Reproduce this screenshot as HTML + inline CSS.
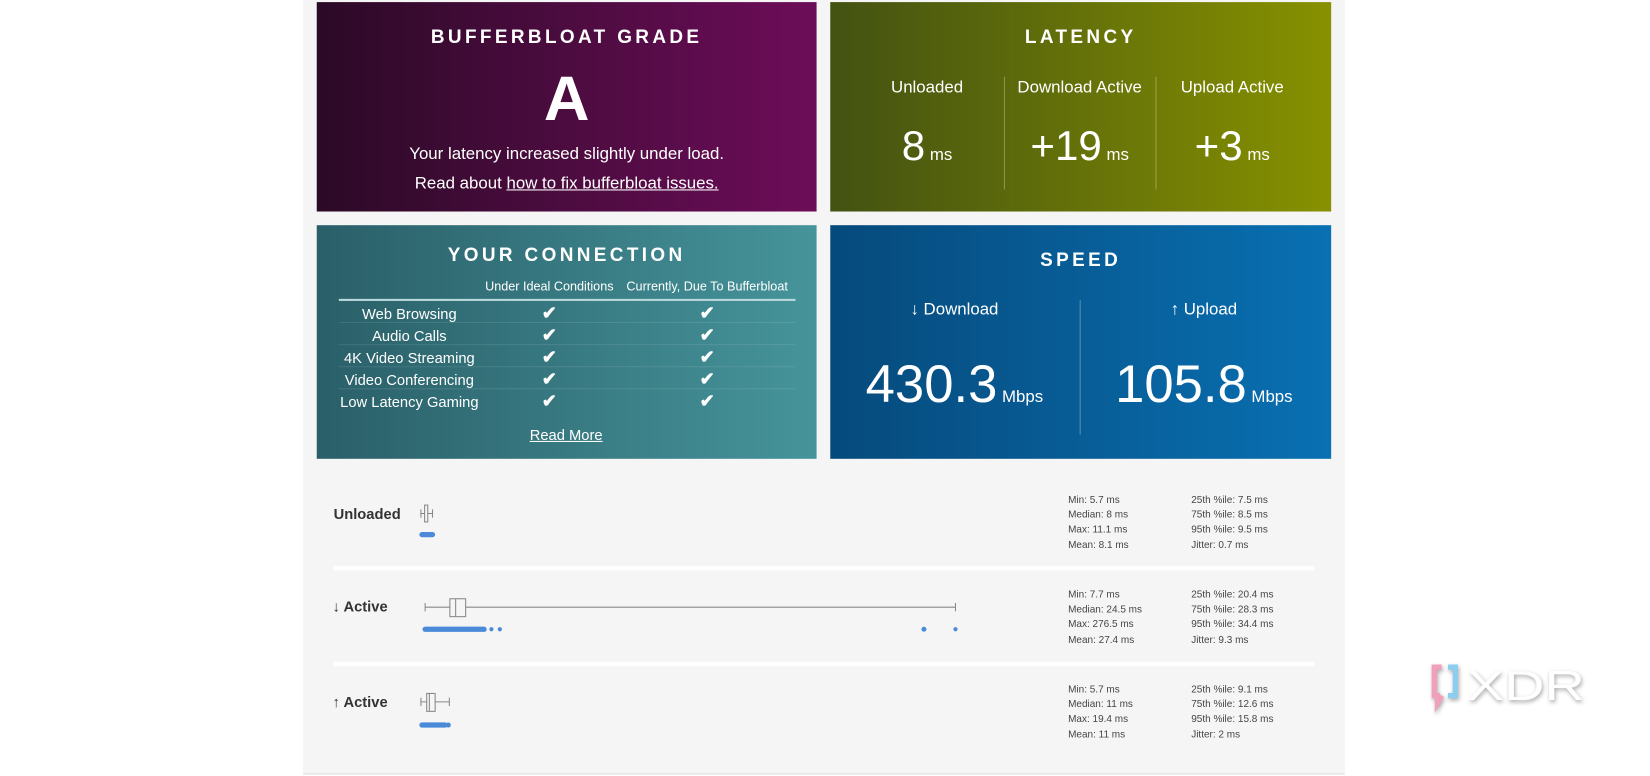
<!DOCTYPE html>
<html><head><meta charset="utf-8"><style>
*{margin:0;padding:0;box-sizing:border-box}
html,body{width:1650px;height:775px;overflow:hidden;background:#fff;font-family:"Liberation Sans",sans-serif}
#w{position:absolute;left:0;top:0;width:1568px;height:737px;transform:scale(1.0523);transform-origin:0 0}
.abs{position:absolute}
.gray{left:288px;top:0;width:990px;height:736px;background:#f5f5f5;border-bottom:1px solid #ddd}
.card{position:absolute;color:#fff;text-align:center}
.t{position:absolute;left:0;right:0;font-weight:bold;font-size:18px;letter-spacing:3.2px}
.c{position:absolute;transform:translateX(-50%);white-space:nowrap}
.vl{position:absolute;width:1px;background:rgba(255,255,255,.3)}
.st{position:absolute;font-size:9.5px;color:#444;line-height:14.2px}
.lbl{position:absolute;font-size:14px;font-weight:bold;color:#333}
.div{position:absolute;left:317px;width:932px;height:4px;background:#fff}
.ck{font-size:17px;font-weight:bold}
</style></head><body><div id="w">
<div class="abs gray"></div>

<div class="card" style="left:301px;top:2px;width:475px;height:199px;background:linear-gradient(90deg,#2b0a26,#6d0d59)">
 <div class="t" style="top:23px">BUFFERBLOAT GRADE</div>
 <div class="t" style="top:57px;font-size:60px;letter-spacing:0;line-height:70px">A</div>
 <div class="abs" style="left:0;right:0;top:136px;font-size:16px">Your latency increased slightly under load.</div>
 <div class="abs" style="left:0;right:0;top:164px;font-size:16px">Read about <u>how to fix bufferbloat issues.</u></div>
</div>

<div class="card" style="left:789px;top:2px;width:476px;height:199px;background:linear-gradient(90deg,#435212,#879100)">
 <div class="t" style="top:23px">LATENCY</div>
 <div class="c" style="left:92px;top:73px;font-size:16px">Unloaded</div>
 <div class="c" style="left:237px;top:73px;font-size:16px">Download Active</div>
 <div class="c" style="left:382px;top:73px;font-size:16px">Upload Active</div>
 <div class="vl" style="left:165px;top:71px;height:107px"></div>
 <div class="vl" style="left:309px;top:71px;height:107px"></div>
 <div class="c" style="left:92px;top:115px;font-size:40px">8<span style="font-size:16px"> ms</span></div>
 <div class="c" style="left:237px;top:115px;font-size:40px">+19<span style="font-size:16px"> ms</span></div>
 <div class="c" style="left:382px;top:115px;font-size:40px">+3<span style="font-size:16px"> ms</span></div>
</div>

<div class="card" style="left:301px;top:214px;width:475px;height:222px;background:linear-gradient(90deg,#2a5f68,#46949b)">
 <div class="t" style="top:18px">YOUR CONNECTION</div>
 <div class="c" style="left:221px;top:51px;font-size:12px">Under Ideal Conditions</div>
 <div class="c" style="left:371px;top:51px;font-size:12px">Currently, Due To Bufferbloat</div>
 <div class="abs" style="left:21px;top:70px;width:434px;height:2px;background:#b8d8dc"></div>
 <div class="abs" style="left:21px;top:72px;width:434px;font-size:14px">
  <div style="position:relative;height:21px;border-bottom:1px solid rgba(255,255,255,.1)"><span class="c" style="left:67px;top:4px">Web Browsing</span><span class="c ck" style="left:200px;top:2px">✔</span><span class="c ck" style="left:350px;top:2px">✔</span></div>
  <div style="position:relative;height:21px;border-bottom:1px solid rgba(255,255,255,.1)"><span class="c" style="left:67px;top:4px">Audio Calls</span><span class="c ck" style="left:200px;top:2px">✔</span><span class="c ck" style="left:350px;top:2px">✔</span></div>
  <div style="position:relative;height:21px;border-bottom:1px solid rgba(255,255,255,.1)"><span class="c" style="left:67px;top:4px">4K Video Streaming</span><span class="c ck" style="left:200px;top:2px">✔</span><span class="c ck" style="left:350px;top:2px">✔</span></div>
  <div style="position:relative;height:21px;border-bottom:1px solid rgba(255,255,255,.1)"><span class="c" style="left:67px;top:4px">Video Conferencing</span><span class="c ck" style="left:200px;top:2px">✔</span><span class="c ck" style="left:350px;top:2px">✔</span></div>
  <div style="position:relative;height:21px"><span class="c" style="left:67px;top:4px">Low Latency Gaming</span><span class="c ck" style="left:200px;top:2px">✔</span><span class="c ck" style="left:350px;top:2px">✔</span></div>
 </div>
 <div class="c" style="left:237px;top:191px;font-size:14px;text-decoration:underline">Read More</div>
</div>

<div class="card" style="left:789px;top:214px;width:476px;height:222px;background:linear-gradient(90deg,#064a7c,#0970b2)">
 <div class="t" style="top:23px">SPEED</div>
 <div class="c" style="left:118px;top:72px;font-size:16px">↓ Download</div>
 <div class="c" style="left:355px;top:72px;font-size:16px">↑ Upload</div>
 <div class="vl" style="left:237px;top:71px;height:128px"></div>
 <div class="c" style="left:118px;top:122px;font-size:50px">430.3<span style="font-size:16px"> Mbps</span></div>
 <div class="c" style="left:355px;top:122px;font-size:50px">105.8<span style="font-size:16px"> Mbps</span></div>
</div>

<div class="lbl" style="left:317px;top:480px">Unloaded</div>
<div class="lbl" style="left:316px;top:568px">↓ Active</div>
<div class="lbl" style="left:316px;top:659px">↑ Active</div>
<div class="div" style="top:538px"></div>
<div class="div" style="top:629px"></div>

<svg class="abs" style="left:0;top:0" width="1568" height="736">
 <g stroke="#888" stroke-width="1" fill="none">
  <line x1="400" y1="488" x2="411" y2="488"/><line x1="400" y1="484" x2="400" y2="492"/><line x1="411" y1="484" x2="411" y2="492"/>
  <rect x="403.5" y="480" width="3" height="16" fill="#f5f5f5"/>
  <line x1="404" y1="577" x2="908" y2="577"/><line x1="404" y1="573" x2="404" y2="581"/><line x1="908" y1="573" x2="908" y2="581"/>
  <rect x="427.5" y="569" width="15" height="17" fill="#f5f5f5"/><line x1="433" y1="569" x2="433" y2="586"/>
  <line x1="400" y1="667" x2="427" y2="667"/><line x1="400" y1="663" x2="400" y2="671"/><line x1="427" y1="663" x2="427" y2="671"/>
  <rect x="405.5" y="659" width="8" height="17" fill="#f5f5f5"/><line x1="408" y1="659" x2="408" y2="676"/>
 </g>
 <g fill="#4a8ad8" stroke="#4a8ad8">
  <line x1="401" y1="508" x2="411" y2="508" stroke-width="5" stroke-linecap="round"/>
  <line x1="404" y1="598" x2="460" y2="598" stroke-width="5" stroke-linecap="round"/>
  <circle cx="467" cy="598" r="2" stroke="none"/><circle cx="475" cy="598" r="2" stroke="none"/>
  <circle cx="878" cy="598" r="2.4" stroke="none"/><circle cx="908" cy="598" r="2" stroke="none"/>
  <line x1="401" y1="689" x2="423" y2="689" stroke-width="5" stroke-linecap="round"/><circle cx="426" cy="689" r="2.4" stroke="none"/>
 </g>
</svg>

<div class="st" style="left:1015px;top:469px">Min: 5.7 ms<br>Median: 8 ms<br>Max: 11.1 ms<br>Mean: 8.1 ms</div>
<div class="st" style="left:1132px;top:469px">25th %ile: 7.5 ms<br>75th %ile: 8.5 ms<br>95th %ile: 9.5 ms<br>Jitter: 0.7 ms</div>
<div class="st" style="left:1015px;top:559px">Min: 7.7 ms<br>Median: 24.5 ms<br>Max: 276.5 ms<br>Mean: 27.4 ms</div>
<div class="st" style="left:1132px;top:559px">25th %ile: 20.4 ms<br>75th %ile: 28.3 ms<br>95th %ile: 34.4 ms<br>Jitter: 9.3 ms</div>
<div class="st" style="left:1015px;top:649px">Min: 5.7 ms<br>Median: 11 ms<br>Max: 19.4 ms<br>Mean: 11 ms</div>
<div class="st" style="left:1132px;top:649px">25th %ile: 9.1 ms<br>75th %ile: 12.6 ms<br>95th %ile: 15.8 ms<br>Jitter: 2 ms</div>

<svg class="abs" style="left:1356px;top:628px;filter:drop-shadow(1px 2px 2px rgba(0,0,0,.35))" width="160" height="50">
 <path d="M14 6 H7 V33 H10 V40 L14 33" fill="none" stroke="#f0a0b8" stroke-width="5"/>
 <path d="M20 6 H27 V33 H20" fill="none" stroke="#8ccdf0" stroke-width="5"/>
 <text x="38" y="37" font-family="Liberation Sans" font-size="40" fill="#fff" textLength="112" lengthAdjust="spacingAndGlyphs">XDR</text>
</svg>
</div></body></html>
